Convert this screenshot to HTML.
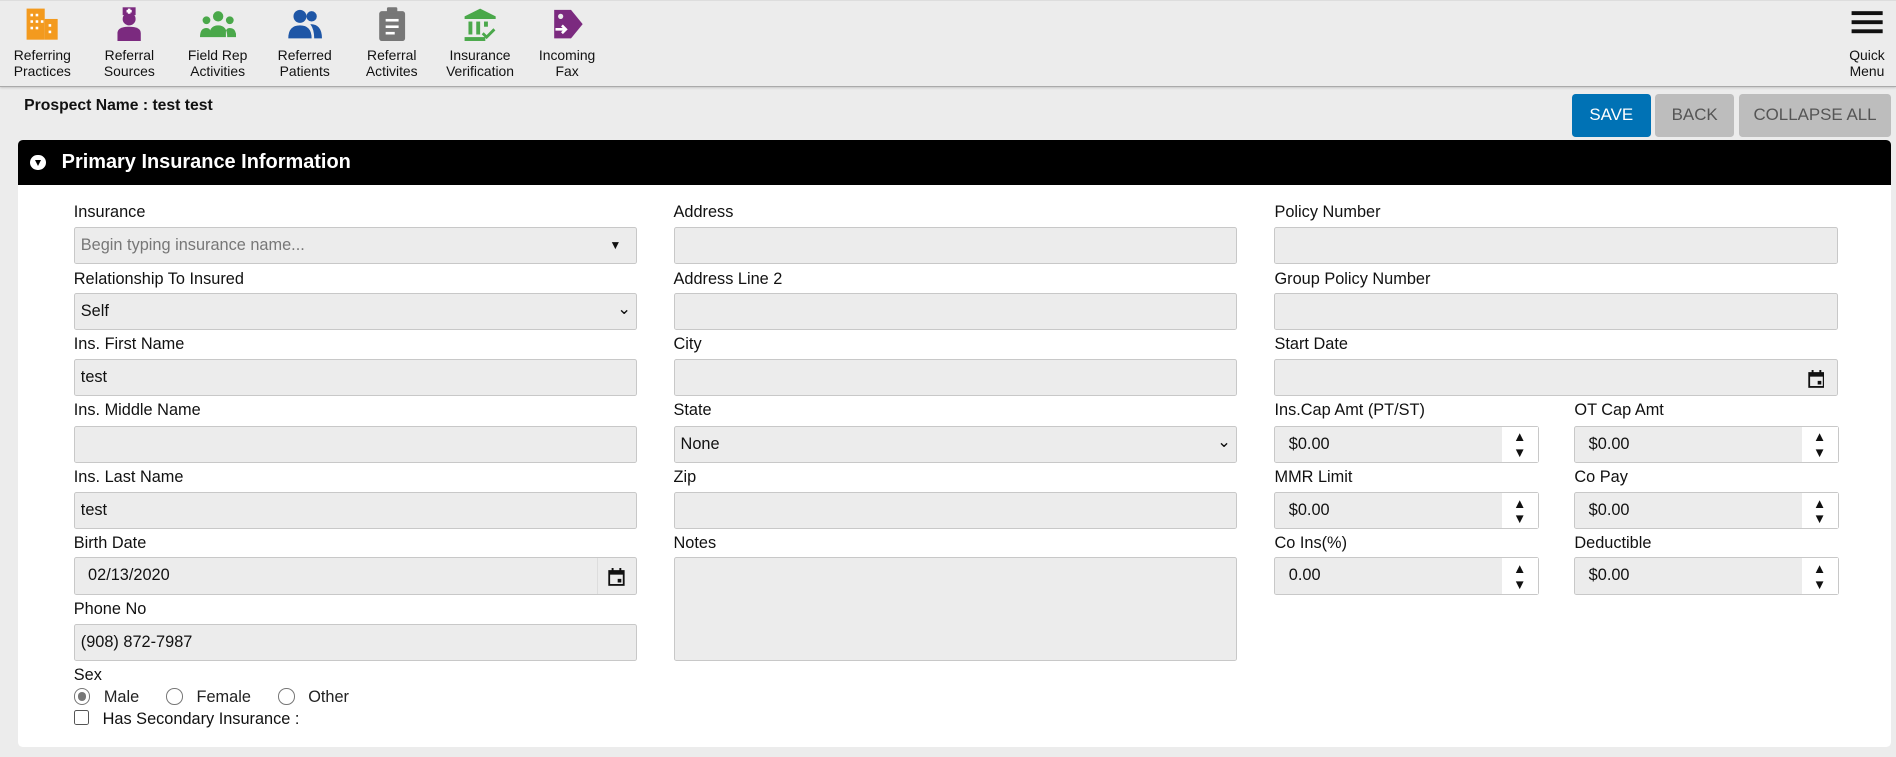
<!DOCTYPE html>
<html><head><meta charset="utf-8">
<style>
html,body{margin:0;padding:0}
body{width:1568px;height:626px;zoom:1.2092;background:#ececec;font-family:"Liberation Sans",Arial,sans-serif;color:#111;position:relative;overflow:hidden}
.nav{position:absolute;left:0;top:0;width:1568px;height:70px;background:#ececec;border-top:1px solid #ddd;border-bottom:1px solid #aaa;box-shadow:0 1px 2px #bbb}
.it{position:absolute;top:4px;width:72px;text-align:center;font-size:11.5px;line-height:13px}
.it svg{display:block;margin:0 auto 5px;width:30px;height:30px}
.pn{position:absolute;left:20px;top:80px;font-size:13px;font-weight:bold}
.btn{position:absolute;top:78px;height:35px;line-height:35px;text-align:center;font-size:14px;border-radius:3px;color:#555;background:#bdbdbd}
.panel{position:absolute;left:15px;top:116px;width:1549px;height:502px;background:#fff;border-radius:4px}
.ph{height:37px;background:#000;border-radius:4px 4px 0 0;color:#fff;font-weight:bold;font-size:16.5px;line-height:37px;padding-left:36px;position:relative}
.ph i{position:absolute;left:10px;top:12px;width:13px;height:13px;border-radius:50%;background:#fff}
.ph i:after{content:"";position:absolute;left:4px;top:4px;width:0;height:0;border-left:2.5px solid transparent;border-right:2.5px solid transparent;border-top:5px solid #000}
.l{position:absolute;font-size:13.5px}
.f{position:absolute;height:29px;background:#ececec;border:1px solid #c8c8c8;border-radius:2px;font-size:13.5px;line-height:29px;padding-left:5px;box-sizing:content-box}
.sp{position:absolute;right:0;top:0;width:30px;height:29px;background:#fff;font-size:11px;line-height:13px;text-align:center;padding-top:2px;box-sizing:border-box}
</style></head><body>
<div class="nav">
 <div class="it" style="left:-1px"><svg viewBox="0 0 28 28"><rect x="2" y="2" width="14" height="24" fill="#f39a1e"/><rect x="16" y="10" width="10" height="16" fill="#f39a1e"/><g fill="#fff"><rect x="5" y="6" width="2" height="2"/><rect x="9" y="6" width="2" height="2"/><rect x="5" y="11" width="2" height="2"/><rect x="9" y="11" width="2" height="2"/><rect x="13" y="11" width="2" height="2"/><rect x="5" y="16" width="2" height="2"/><rect x="9" y="16" width="2" height="2"/><rect x="19" y="14" width="2" height="2"/><rect x="19" y="19" width="2" height="2"/></g></svg>Referring<br>Practices</div>
 <div class="it" style="left:71px"><svg viewBox="0 0 28 28"><rect x="9" y="1" width="10" height="6" fill="#7b2a7f"/><circle cx="14" cy="10" r="5" fill="#7b2a7f"/><path d="M5 27v-6q0-5 9-5q9 0 9 5v6z" fill="#7b2a7f"/><path d="M13 2h2v4h-2zM12 3h4v2h-4z" fill="#fff"/></svg>Referral<br>Sources</div>
 <div class="it" style="left:144px"><svg viewBox="0 0 28 28" fill="#4aa84a"><circle cx="14" cy="8" r="4"/><circle cx="5" cy="11" r="3"/><circle cx="23" cy="11" r="3"/><path d="M7 24q0-9 7-9q7 0 7 9zM0 24q0-7 5-7q3 0 3 3v4zM28 24q0-7-5-7q-3 0-3 3v4z"/></svg>Field Rep<br>Activities</div>
 <div class="it" style="left:216px"><svg viewBox="0 0 28 28" fill="#1e56a6"><circle cx="10" cy="8" r="5"/><circle cx="19" cy="8" r="4"/><path d="M1 25q0-10 9-10q9 0 9 10zM18 14q9 0 9 11h-6q0-7-3-11z"/></svg>Referred<br>Patients</div>
 <div class="it" style="left:288px"><svg viewBox="0 0 28 28"><rect x="4" y="4" width="20" height="23" rx="2" fill="#777"/><rect x="10" y="1" width="8" height="5" rx="1" fill="#777"/><g fill="#fff"><rect x="9" y="10" width="10" height="2"/><rect x="9" y="15" width="10" height="2"/><rect x="9" y="20" width="7" height="2"/></g></svg>Referral<br>Activites</div>
 <div class="it" style="left:361px"><svg viewBox="0 0 28 28" fill="#4aa84a"><path d="M2 8l12-6l12 6v2h-24z"/><rect x="5" y="12" width="3" height="10"/><rect x="11" y="12" width="3" height="10"/><rect x="17" y="12" width="3" height="4"/><rect x="2" y="24" width="16" height="3"/><path d="M16 21l3 3l6-6" stroke="#4aa84a" stroke-width="2.2" fill="none"/></svg>Insurance<br>Verification</div>
 <div class="it" style="left:433px"><svg viewBox="0 0 28 28"><path d="M4 3h13l9 11l-9 11h-13z" fill="#7b2a7f"/><circle cx="9" cy="8" r="2" fill="#ececec"/><path d="M5 18h7M10 15l3 3l-3 3" stroke="#fff" stroke-width="2" fill="none"/></svg>Incoming<br>Fax</div>
 <div class="it" style="left:1508px"><svg viewBox="0 0 28 28"><rect x="2" y="4" width="24" height="3" fill="#111"/><rect x="2" y="11" width="24" height="3" fill="#111"/><rect x="2" y="18" width="24" height="3" fill="#111"/></svg>Quick<br>Menu</div>
</div>
<div class="pn">Prospect Name : test test</div>
<div class="btn" style="left:1300px;width:65px;background:#0072b5;color:#fff">SAVE</div>
<div class="btn" style="left:1369px;width:65px">BACK</div>
<div class="btn" style="left:1438px;width:126px">COLLAPSE ALL</div>
<div class="panel"><div class="ph"><i></i>Primary Insurance Information</div></div>

<div class="l" style="left:61px;top:168px">Insurance</div>
<div class="f" style="left:61px;top:188px;width:459px;color:#777">Begin typing insurance name...<span style="position:absolute;right:12px;color:#111;font-size:10px">▼</span></div>
<div class="l" style="left:61px;top:223px">Relationship To Insured</div>
<div class="f" style="left:61px;top:242px;width:459px">Self<span style="position:absolute;right:4px;top:-1px">⌄</span></div>
<div class="l" style="left:61px;top:277px">Ins. First Name</div>
<div class="f" style="left:61px;top:297px;width:459px">test</div>
<div class="l" style="left:61px;top:332px">Ins. Middle Name</div>
<div class="f" style="left:61px;top:352px;width:459px"></div>
<div class="l" style="left:61px;top:387px">Ins. Last Name</div>
<div class="f" style="left:61px;top:407px;width:459px">test</div>
<div class="l" style="left:61px;top:442px">Birth Date</div>
<div class="f" style="left:61px;top:461px;width:459px;padding-left:11px;width:453px">02/13/2020<span style="position:absolute;right:0;top:0;width:31px;height:29px;border-left:1px solid #ddd"><svg style="position:absolute;left:8px;top:8px" width="14" height="15" viewBox="0 0 14 15"><rect x="1" y="2.5" width="12" height="11.5" fill="none" stroke="#111" stroke-width="1.5"/><rect x="1" y="2.5" width="12" height="3" fill="#111"/><rect x="3" y="0" width="1.6" height="3" fill="#111"/><rect x="9.4" y="0" width="1.6" height="3" fill="#111"/><rect x="8" y="9" width="3" height="3" fill="#111"/></svg></span></div>
<div class="l" style="left:61px;top:496px">Phone No</div>
<div class="f" style="left:61px;top:516px;width:459px">(908) 872-7987</div>
<div class="l" style="left:61px;top:551px">Sex</div>
<div class="l" style="left:61px;top:569px;color:#222"><span style="display:inline-block;width:12px;height:12px;border:1px solid #777;border-radius:50%;vertical-align:-2px;position:relative"><span style="position:absolute;left:2.5px;top:2.5px;width:7px;height:7px;border-radius:50%;background:#777"></span></span>&nbsp;&nbsp; Male&nbsp;&nbsp;&nbsp;&nbsp;&nbsp; <span style="display:inline-block;width:12px;height:12px;border:1px solid #777;border-radius:50%;vertical-align:-2px"></span>&nbsp;&nbsp; Female&nbsp;&nbsp;&nbsp;&nbsp;&nbsp; <span style="display:inline-block;width:12px;height:12px;border:1px solid #777;border-radius:50%;vertical-align:-2px"></span>&nbsp;&nbsp; Other</div>
<div class="l" style="left:61px;top:587px"><span style="display:inline-block;width:11px;height:11px;border:1px solid #555;border-radius:2px;vertical-align:-1px"></span>&nbsp;&nbsp; Has Secondary Insurance :</div>

<div class="l" style="left:557px;top:168px">Address</div>
<div class="f" style="left:557px;top:188px;width:459px"></div>
<div class="l" style="left:557px;top:223px">Address Line 2</div>
<div class="f" style="left:557px;top:242px;width:459px"></div>
<div class="l" style="left:557px;top:277px">City</div>
<div class="f" style="left:557px;top:297px;width:459px"></div>
<div class="l" style="left:557px;top:332px">State</div>
<div class="f" style="left:557px;top:352px;width:459px">None<span style="position:absolute;right:4px;top:-1px">⌄</span></div>
<div class="l" style="left:557px;top:387px">Zip</div>
<div class="f" style="left:557px;top:407px;width:459px"></div>
<div class="l" style="left:557px;top:442px">Notes</div>
<div class="f" style="left:557px;top:461px;width:459px;height:84px"></div>

<div class="l" style="left:1054px;top:168px">Policy Number</div>
<div class="f" style="left:1054px;top:188px;width:459px"></div>
<div class="l" style="left:1054px;top:223px">Group Policy Number</div>
<div class="f" style="left:1054px;top:242px;width:459px"></div>
<div class="l" style="left:1054px;top:277px">Start Date</div>
<div class="f" style="left:1054px;top:297px;width:459px"><svg style="position:absolute;right:10px;top:8px" width="14" height="15" viewBox="0 0 14 15"><rect x="1" y="2.5" width="12" height="11.5" fill="none" stroke="#111" stroke-width="1.5"/><rect x="1" y="2.5" width="12" height="3" fill="#111"/><rect x="3" y="0" width="1.6" height="3" fill="#111"/><rect x="9.4" y="0" width="1.6" height="3" fill="#111"/><rect x="8" y="9" width="3" height="3" fill="#111"/></svg></div>

<div class="l" style="left:1054px;top:332px">Ins.Cap Amt (PT/ST)</div>
<div class="f" style="left:1054px;top:352px;width:206px;padding-left:11px">$0.00<div class="sp">▲<br>▼</div></div>
<div class="l" style="left:1302px;top:332px">OT Cap Amt</div>
<div class="f" style="left:1302px;top:352px;width:206px;padding-left:11px">$0.00<div class="sp">▲<br>▼</div></div>
<div class="l" style="left:1054px;top:387px">MMR Limit</div>
<div class="f" style="left:1054px;top:407px;width:206px;padding-left:11px">$0.00<div class="sp">▲<br>▼</div></div>
<div class="l" style="left:1302px;top:387px">Co Pay</div>
<div class="f" style="left:1302px;top:407px;width:206px;padding-left:11px">$0.00<div class="sp">▲<br>▼</div></div>
<div class="l" style="left:1054px;top:442px">Co Ins(%)</div>
<div class="f" style="left:1054px;top:461px;width:206px;padding-left:11px">0.00<div class="sp">▲<br>▼</div></div>
<div class="l" style="left:1302px;top:442px">Deductible</div>
<div class="f" style="left:1302px;top:461px;width:206px;padding-left:11px">$0.00<div class="sp">▲<br>▼</div></div>
</body></html>
